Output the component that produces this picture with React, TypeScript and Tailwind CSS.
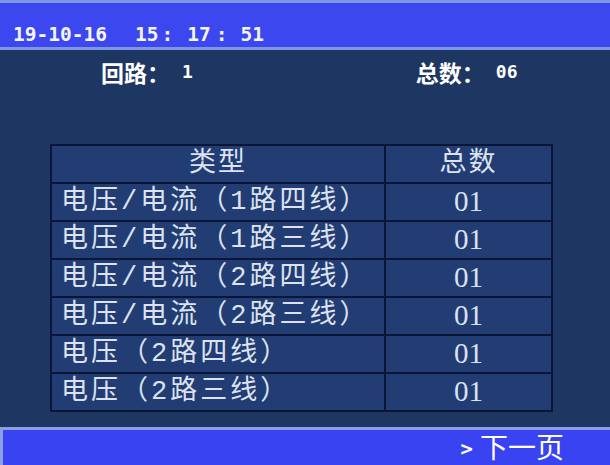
import React from "react";

const rows = [
  "电压/电流（1路四线）",
  "电压/电流（1路三线）",
  "电压/电流（2路四线）",
  "电压/电流（2路三线）",
  "电压（2路四线）",
  "电压（2路三线）",
];

const cellFont = {
  fontFamily: '"Liberation Mono", "Noto Sans CJK SC", monospace',
};

const monoBold = { fontFamily: '"DejaVu Sans Mono", "Noto Sans CJK SC", monospace' };

export default function App() {
  return (
    <div className="w-[610px] h-[465px] bg-[#1e3662] flex flex-col">
      {/* top bar */}
      <div className="h-[50px] shrink-0 border-t-[3px] border-b-[3px] border-[#8096e4] bg-[#3c47ef] pl-[13px] pt-[22px]">
        <div className="flex text-[19.5px] leading-none font-bold text-[#f4f6ff] whitespace-pre" style={monoBold}>
          <span>19-10-16</span>
          <span className="ml-[28px]">15</span>
          <span className="ml-[3px]">:</span>
          <span className="ml-[14px]">17</span>
          <span className="ml-[5px]">:</span>
          <span className="ml-[13px]">51</span>
        </div>
      </div>

      {/* summary line */}
      <div className="h-[44px] shrink-0 flex items-center text-white font-bold" style={{ fontFamily: '"Noto Sans CJK SC", sans-serif' }}>
        <div className="ml-[101px] flex items-center">
          <span className="text-[23px] leading-none">回路：</span>
          <span className="text-[18px] leading-none ml-[12px]" style={monoBold}>1</span>
        </div>
        <div className="ml-[223px] flex items-center">
          <span className="text-[23px] leading-none">总数：</span>
          <span className="text-[18px] leading-none ml-[11px]" style={monoBold}>06</span>
        </div>
      </div>

      {/* table */}
      <div className="mt-[50px] ml-[50px] w-[503px] shrink-0 border-2 border-[#0b1536] bg-[#213d74] text-[#dde2ee]">
        <div className="flex h-[36px]">
          <div className="w-[334px] border-r-2 border-[#0b1536] flex items-center justify-center text-[27px] tracking-[2px]" style={cellFont}>
            类型
          </div>
          <div className="flex-1 flex items-center justify-center text-[27px] tracking-[2px]" style={cellFont}>
            总数
          </div>
        </div>
        {rows.map((r) => (
          <div key={r} className="flex h-[38px] border-t-2 border-[#0b1536]">
            <div className="w-[334px] border-r-2 border-[#0b1536] flex items-center pl-[9px] text-[27px] tracking-[3px] whitespace-pre" style={cellFont}>
              {r}
            </div>
            <div
              className="flex-1 flex items-center justify-center text-[29px]"
              style={{ fontFamily: '"Liberation Serif", serif' }}
            >
              01
            </div>
          </div>
        ))}
      </div>

      {/* bottom bar */}
      <div className="mt-[15px] h-[38px] shrink-0 border-t-[3px] border-l-[3px] border-[#8a9fe6] bg-[#3a43f2] flex items-start justify-end pr-[46px]">
        <div className="flex items-center text-white -mt-[1px]" style={{ fontFamily: '"Noto Sans CJK SC", sans-serif' }}>
          <span className="text-[21px] leading-[30px] font-bold mr-[7px] mt-[4px]">&gt;</span>
          <span className="text-[28px] leading-[32px]">下一页</span>
        </div>
      </div>
    </div>
  );
}
